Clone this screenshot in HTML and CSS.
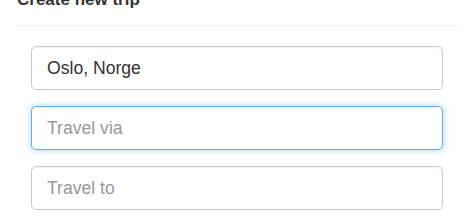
FILE: index.html
```html
<!DOCTYPE html>
<html lang="en">
<head>
    <meta charset="UTF-8">
    <meta name="viewport" content="width=device-width, initial-scale=1.0">
    <title>Create new trip</title>
    <link rel="stylesheet" href="styles.css">
</head>
<body>
    <div class="trip-panel">
        <div class="trip-header">
            <h3 class="trip-title">Create new trip</h3>
        </div>
        <form class="trip-form">
            <input type="text" class="trip-input" value="Oslo, Norge">
            <input type="text" class="trip-input focused" placeholder="Travel via">
            <input type="text" class="trip-input" placeholder="Travel to">
        </form>
    </div>
</body>
</html>
```

FILE: styles.css
```css
body {
    margin: 0;
    font-family: "Liberation Sans", Arial, sans-serif;
    background: #fff;
    color: #333;
}
.trip-panel {
    width: 443px;
    margin-left: 16px;
}
.trip-header {
    padding-bottom: 15px;
    border-bottom: 1px solid #eee;
}
.trip-title {
    margin: -10px 0 0 1px;
    font-size: 17px;
    line-height: 20px;
    font-weight: bold;
}
.trip-form {
    display: flex;
    flex-direction: column;
    gap: 16px;
    padding: 20px 16px 0 15px;
}
.trip-input {
    box-sizing: border-box;
    width: 412px;
    height: 44px;
    padding: 0 15px;
    font-family: "Liberation Sans", Arial, sans-serif;
    font-size: 17.6px;
    color: #333;
    border: 1px solid #ccc;
    border-radius: 5px;
    box-shadow: inset 0 1px 1px rgba(0, 0, 0, 0.05);
    outline: none;
}
.trip-input::placeholder {
    color: #999;
}
.trip-input.focused {
    border-color: #66afe9;
    box-shadow: inset 0 1px 1px rgba(0, 0, 0, 0.075), 0 0 6px rgba(102, 175, 233, 0.6);
}
```
